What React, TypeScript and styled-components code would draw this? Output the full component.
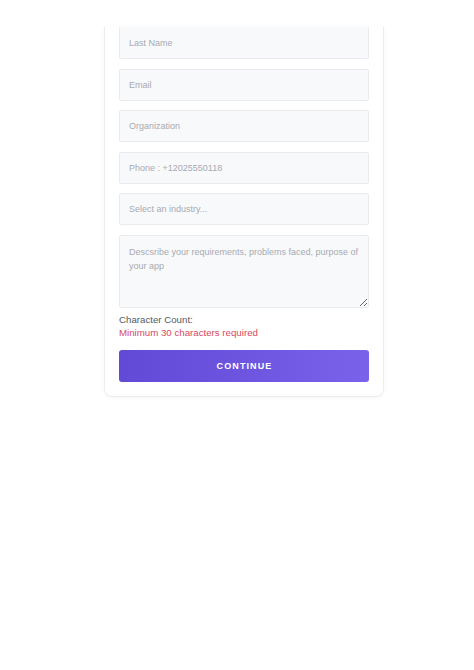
import React from "react";
import styled, { createGlobalStyle } from "styled-components";

const Global = createGlobalStyle`
  html, body { margin: 0; padding: 0; background: #ffffff; }
  body { font-family: "Liberation Sans", Arial, Helvetica, sans-serif; }
  * { box-sizing: border-box; }
`;

const Page = styled.div`
  width: 474px;
  min-height: 670px;
  padding-top: 27px;
  background: #ffffff;
`;

const Card = styled.form`
  margin-left: 104px;
  width: 280px;
  background: #ffffff;
  border: 1px solid #ededf0;
  border-top: none;
  border-radius: 0 0 8px 8px;
  box-shadow: 0 1px 4px rgba(20, 20, 40, 0.04);
  padding: 0 14px 14px;
  display: flex;
  flex-direction: column;
`;

const Fields = styled.div`
  display: flex;
  flex-direction: column;
  gap: 9.5px;
`;

const fieldBase = `
  width: 250px;
  background: #f8f9fb;
  border: 1px solid #e9ebef;
  border-radius: 2px;
  font-family: "Liberation Sans", Arial, Helvetica, sans-serif;
  font-size: 9px;
  color: #333;
  outline: none;
  padding: 0 9px;
  &::placeholder { color: #a7aab1; opacity: 1; }
`;

const Input = styled.input<{ $clipped?: boolean }>`
  ${fieldBase}
  height: 32px;
  ${(p) => (p.$clipped ? "border-top-color: transparent; border-radius: 0 0 2px 2px;" : "")}
`;

const TextArea = styled.textarea`
  ${fieldBase}
  height: 73px;
  padding: 9px 9px;
  line-height: 14px;
  resize: vertical;
  display: block;
`;

const Info = styled.div`
  margin-top: 5px;
  display: flex;
  flex-direction: column;
`;

const Line = styled.div<{ $error?: boolean }>`
  font-size: 9.7px;
  line-height: 13px;
  color: ${(p) => (p.$error ? "#d6495f" : "#555a60")};
`;

const Button = styled.button`
  margin-top: 11px;
  width: 250px;
  height: 32px;
  border: none;
  border-radius: 3px;
  background: linear-gradient(90deg, #6249d6 0%, #6d55e0 50%, #7a62ea 100%);
  color: #ffffff;
  font-family: "Liberation Sans", Arial, Helvetica, sans-serif;
  font-weight: 700;
  font-size: 9px;
  letter-spacing: 1.1px;
  padding: 0 0 0 1px;
  cursor: pointer;
`;

export default function App() {
  return (
    <>
      <Global />
      <Page>
        <Card onSubmit={(e) => e.preventDefault()}>
          <Fields>
            <Input $clipped placeholder="Last Name" />
            <Input placeholder="Email" />
            <Input placeholder="Organization" />
            <Input placeholder="Phone : +12025550118" />
            <Input placeholder="Select an industry..." />
            <TextArea placeholder="Descsribe your requirements, problems faced, purpose of your app" />
          </Fields>
          <Info>
            <Line>Character Count:</Line>
            <Line $error>Minimum 30 characters required</Line>
          </Info>
          <Button type="submit">CONTINUE</Button>
        </Card>
      </Page>
    </>
  );
}
